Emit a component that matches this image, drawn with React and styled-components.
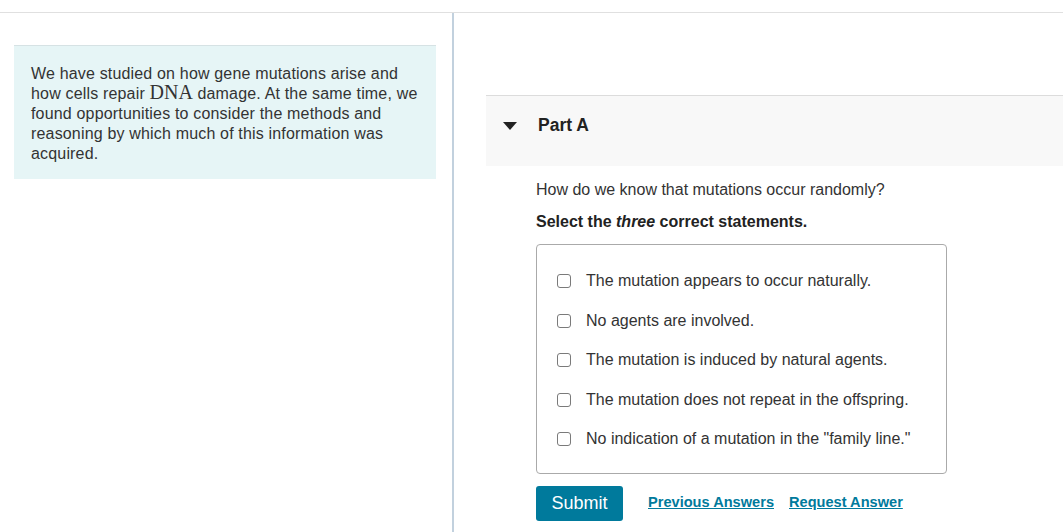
import React from 'react';
import styled, { createGlobalStyle } from 'styled-components';

const GlobalStyle = createGlobalStyle`
  html, body {
    margin: 0;
    padding: 0;
    background: #fff;
  }
  body {
    font-family: "Liberation Sans", Arial, sans-serif;
    color: #333;
  }
`;

const Page = styled.div`
  height: 532px;
  padding-top: 12px;
  box-sizing: border-box;
  overflow: hidden;
`;

const Columns = styled.div`
  display: grid;
  grid-template-columns: 454px 1fr;
  border-top: 1px solid #e0e0e0;
  height: 520px;
`;

const LeftPane = styled.div`
  border-right: 2px solid #c2d1de;
  padding: 32px 16px 0 14px;
`;

const IntroBox = styled.div`
  background: #e6f5f6;
  border-top: 1px solid #d6e2e4;
  padding: 18px 14px 15px 17px;
  font-size: 16px;
  letter-spacing: 0.17px;
  line-height: 20px;
  color: #333;
`;

const MathText = styled.span`
  font-family: "Liberation Serif", "Times New Roman", serif;
  font-size: 20px;
  line-height: 0;
  letter-spacing: 0;
`;

const RightPane = styled.div`
  padding: 82px 0 0 32px;
`;

const PartHeader = styled.div`
  display: flex;
  align-items: center;
  height: 71px;
  box-sizing: border-box;
  background: #f8f8f8;
  border-top: 1px solid #dcdcdc;
  padding: 0 0 11px 17px;
`;

const Caret = styled.span`
  width: 0;
  height: 0;
  border-left: 7px solid transparent;
  border-right: 7px solid transparent;
  border-top: 8px solid #222;
  margin-right: 21px;
`;

const PartTitle = styled.h2`
  margin: 0;
  font-size: 17.5px;
  font-weight: bold;
  color: #222;
`;

const PartBody = styled.div`
  padding: 14px 0 0 50px;
`;

const Question = styled.p`
  margin: 0;
  font-size: 16px;
  line-height: 20px;
  color: #333;
`;

const Instruction = styled.p`
  margin: 12px 0 0;
  font-size: 16px;
  line-height: 20px;
  font-weight: bold;
  color: #222;
`;

const OptionsBox = styled.div`
  width: 411px;
  height: 230px;
  box-sizing: border-box;
  margin-top: 12px;
  border: 1px solid #aaa;
  border-radius: 4px;
  padding: 26px 0 0 20px;
  display: flex;
  flex-direction: column;
  gap: 19.5px;
`;

const OptionRow = styled.label`
  display: flex;
  align-items: center;
  font-size: 16px;
  line-height: 20px;
  color: #333;
`;

const Box = styled.span`
  width: 12px;
  height: 12px;
  border: 1px solid #7a7a7a;
  border-radius: 3px;
  margin-right: 15px;
  flex-shrink: 0;
`;

const Actions = styled.div`
  display: flex;
  align-items: center;
  margin-top: 12px;
`;

const SubmitButton = styled.button`
  width: 87px;
  height: 35px;
  background: #007a9c;
  color: #fff;
  border: none;
  border-radius: 3px;
  font-family: "Liberation Sans", Arial, sans-serif;
  font-size: 18px;
  padding: 0;
  margin-right: 25px;
`;

const ActionLink = styled.a`
  font-size: 14.6px;
  font-weight: bold;
  color: #007a9c;
  text-decoration: underline;
  margin: 0 15px 3px 0;
  cursor: pointer;
`;

const options = [
  'The mutation appears to occur naturally.',
  'No agents are involved.',
  'The mutation is induced by natural agents.',
  'The mutation does not repeat in the offspring.',
  'No indication of a mutation in the "family line."',
];

export default function App() {
  return (
    <>
      <GlobalStyle />
      <Page>
        <Columns>
          <LeftPane>
            <IntroBox>
              We have studied on how gene mutations arise and how cells repair{' '}
              <MathText>DNA</MathText> damage. At the same time, we found
              opportunities to consider the methods and reasoning by which much
              of this information was acquired.
            </IntroBox>
          </LeftPane>
          <RightPane>
            <PartHeader>
              <Caret />
              <PartTitle>Part A</PartTitle>
            </PartHeader>
            <PartBody>
              <Question>How do we know that mutations occur randomly?</Question>
              <Instruction>
                Select the <i>three</i> correct statements.
              </Instruction>
              <OptionsBox>
                {options.map((o) => (
                  <OptionRow key={o}>
                    <Box />
                    {o}
                  </OptionRow>
                ))}
              </OptionsBox>
              <Actions>
                <SubmitButton>Submit</SubmitButton>
                <ActionLink>Previous Answers</ActionLink>
                <ActionLink>Request Answer</ActionLink>
              </Actions>
            </PartBody>
          </RightPane>
        </Columns>
      </Page>
    </>
  );
}
